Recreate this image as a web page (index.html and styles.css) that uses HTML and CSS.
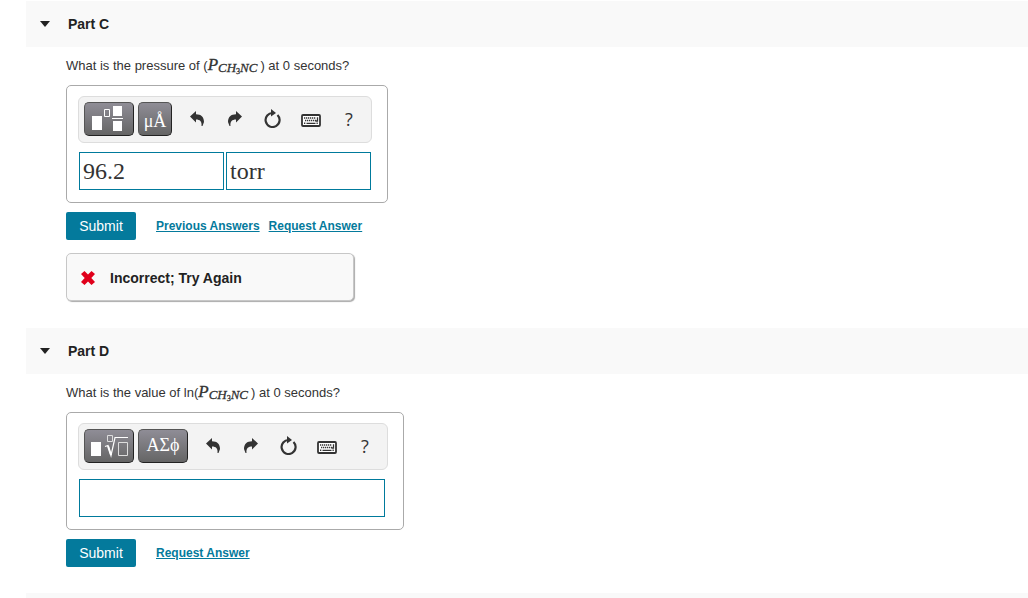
FILE: index.html
```html
<!DOCTYPE html>
<html lang="en">
<head>
    <meta charset="UTF-8">
    <meta name="viewport" content="width=device-width, initial-scale=1.0">
    <title>Assignment</title>
    <link rel="stylesheet" href="styles.css">
</head>
<body>
    <svg class="sprite" aria-hidden="true">
        <symbol id="undo" viewBox="0 0 14 15">
            <path d="M0 5.500 L6 0 V3.300 C11 3.300 14 6 14 11 L12.500 15 H11.500 C12 10.500 10 8.500 6 8.500 V11.500 Z" fill="#333"/>
        </symbol>
        <symbol id="redo" viewBox="0 0 14 15">
            <path d="M14 5.500 L8 0 V3.300 C3 3.300 0 6 0 11 L1.500 15 H2.500 C2 10.500 4 8.500 8 8.500 V11.500 Z" fill="#333"/>
        </symbol>
        <symbol id="reset" viewBox="0 0 18 19">
            <path d="M9 4 A7 7 0 1 0 13.500 6" fill="none" stroke="#333" stroke-width="2.200"/>
            <path d="M7 0 L12 4 L7 7.500 Z" fill="#333"/>
        </symbol>
        <symbol id="keyboard" viewBox="0 0 20 13">
            <rect x="1" y="1" width="18" height="11" rx="1" fill="#fff" stroke="#333" stroke-width="1.800"/>
            <path d="M3 4 H15 M4 6.500 H15 M3 9.300 H4.500 M15.500 9.300 H17" stroke="#333" stroke-width="1.400" stroke-dasharray="1.300 0.700"/>
            <path d="M5.500 9.300 H14.500 M16.500 3.300 V7 H14.500" fill="none" stroke="#333" stroke-width="1.300"/>
        </symbol>
    </svg>

    <main>
        <section class="part">
            <header class="part-header">
                <button class="toggle" type="button" aria-label="Collapse Part C"></button>
                <h2>Part C</h2>
            </header>
            <div class="part-body">
                <p class="question">What is the pressure of (<span class="math"><i>P</i><sub>CH<sub>3</sub>NC</sub></span>) at 0 seconds?</p>
                <div class="answer-box">
                    <div class="toolbar">
                        <button class="tool" type="button" aria-label="Templates">
                            <svg width="34" height="26" viewBox="0 0 34 26">
                                <path d="M0 10h10v14H0z M21 0h9v10h-9z M21 15h9v10h-9z" fill="#fff"/>
                                <path d="M12.500 3.500h5v7h-5z M20 12.500h11" fill="none" stroke="#fff"/>
                            </svg>
                        </button>
                        <button class="tool units" type="button">μÅ</button>
                        <div class="actions">
                            <button class="action" type="button" aria-label="Undo"><svg width="14" height="15"><use href="#undo"/></svg></button>
                            <button class="action" type="button" aria-label="Redo"><svg width="14" height="15"><use href="#redo"/></svg></button>
                            <button class="action" type="button" aria-label="Reset"><svg width="18" height="19"><use href="#reset"/></svg></button>
                            <button class="action keys" type="button" aria-label="Keyboard shortcuts"><svg width="20" height="13"><use href="#keyboard"/></svg></button>
                            <button class="action" type="button">?</button>
                        </div>
                    </div>
                    <div class="fields">
                        <input class="field" type="text" value="96.2" size="1" aria-label="Value">
                        <input class="field" type="text" value="torr" size="1" aria-label="Units">
                    </div>
                </div>
                <div class="controls">
                    <button class="submit" type="button">Submit</button>
                    <a href="#">Previous Answers</a>
                    <a href="#">Request Answer</a>
                </div>
                <div class="feedback">
                    <svg width="14" height="14" viewBox="0 0 14 14" aria-hidden="true">
                        <path d="M3.500 0 L7 3.500 L10.500 0 L14 3 L10.300 7 L14 11 L10.500 14 L7 10.500 L3.500 14 L0 11 L3.700 7 L0 3 Z" fill="#e0001b"/>
                    </svg>
                    <strong>Incorrect; Try Again</strong>
                </div>
            </div>
        </section>

        <section class="part">
            <header class="part-header">
                <button class="toggle" type="button" aria-label="Collapse Part D"></button>
                <h2>Part D</h2>
            </header>
            <div class="part-body">
                <p class="question">What is the value of ln(<span class="math"><i>P</i><sub>CH<sub>3</sub>NC</sub></span>) at 0 seconds?</p>
                <div class="answer-box wide">
                    <div class="toolbar">
                        <button class="tool" type="button" aria-label="Templates">
                            <svg width="40" height="26" viewBox="-1 0 40 26">
                                <path d="M1 9h10v14H1z" fill="#fff"/>
                                <path d="M17.500 2.500h5v6h-5z M28.500 9.500h9v13h-9z" fill="none" stroke="#ddd"/>
                                <path d="M15 13.500l3-1 3 10 4-18h13" fill="none" stroke="#fff" stroke-width="1.200"/>
                                <path d="M18 13l3 9" stroke="#fff" stroke-width="2"/>
                            </svg>
                        </button>
                        <button class="tool" type="button">ΑΣϕ</button>
                        <div class="actions">
                            <button class="action" type="button" aria-label="Undo"><svg width="14" height="15"><use href="#undo"/></svg></button>
                            <button class="action" type="button" aria-label="Redo"><svg width="14" height="15"><use href="#redo"/></svg></button>
                            <button class="action" type="button" aria-label="Reset"><svg width="18" height="19"><use href="#reset"/></svg></button>
                            <button class="action keys" type="button" aria-label="Keyboard shortcuts"><svg width="20" height="13"><use href="#keyboard"/></svg></button>
                            <button class="action" type="button">?</button>
                        </div>
                    </div>
                    <div class="fields">
                        <input class="field" type="text" size="1" aria-label="Answer">
                    </div>
                </div>
                <div class="controls">
                    <button class="submit" type="button">Submit</button>
                    <a href="#">Request Answer</a>
                </div>
            </div>
        </section>

        <div class="next-part"></div>
    </main>
</body>
</html>
```

FILE: styles.css
```css
* {
    box-sizing: border-box;
}
body {
    margin: 0;
    background: #fff;
    color: #333;
    font-family: "Liberation Sans", Arial, sans-serif;
    font-size: 13px;
}
button {
    font-family: inherit;
    cursor: pointer;
}
.sprite {
    display: none;
}
main {
    padding: 1px 0 0 26px;
}
.part {
    margin-bottom: 26px;
}
.part-header {
    display: flex;
    align-items: center;
    gap: 18px;
    height: 46px;
    padding-left: 14px;
    background: #f9f9f9;
}
.part-header h2 {
    margin: 0;
    font-size: 14px;
    color: #222;
}
.toggle {
    width: 10px;
    height: 6px;
    padding: 0;
    border: 0;
    background: #222;
    clip-path: polygon(0 0, 100% 0, 50% 100%);
}
.part-body {
    padding-left: 40px;
}
.question {
    margin: 0;
    height: 38px;
    line-height: 38px;
}
.math {
    font-family: "Liberation Serif", "Times New Roman", serif;
    font-style: italic;
    font-size: 17px;
    line-height: 1px;
    padding-right: 3px;
}
.math i {
    -webkit-text-stroke: 0.3px #333;
}
.math sub {
    font-size: 13px;
    vertical-align: -2px;
    -webkit-text-stroke: 0.3px #333;
}
.math sub sub {
    font-size: 8px;
    font-style: normal;
}

/* answer editor */
.answer-box {
    width: 322px;
    max-width: 100%;
    padding: 10px 15px 12px 11px;
    border: 1px solid #aaa;
    border-radius: 5px;
}
.wide {
    width: 338px;
}
.toolbar {
    display: flex;
    align-items: center;
    gap: 4px;
    height: 47px;
    padding: 0 5px 2px;
    border: 1px solid #ddd;
    border-radius: 6px;
    background: #f3f3f3;
}
.tool {
    display: flex;
    flex: none;
    align-items: center;
    justify-content: center;
    width: 50px;
    height: 34px;
    padding: 0;
    border: 1px solid #555;
    border-right-color: #222;
    border-bottom-color: #222;
    border-radius: 5px;
    background: linear-gradient(#8f8d96, #656565);
    color: #fff;
    font-family: "Liberation Serif", "Times New Roman", serif;
    font-size: 18px;
}
.units {
    width: 34px;
    padding-top: 5px;
}
.actions {
    display: flex;
    flex: none;
    margin-left: 2px;
}
.action {
    display: flex;
    align-items: center;
    justify-content: center;
    width: 38px;
    height: 34px;
    padding: 0;
    border: 0;
    background: none;
    color: #333;
    font-family: "Open Sans", sans-serif;
    font-size: 18px;
    font-weight: 500;
}
.keys {
    padding-top: 4px;
}
.fields {
    display: flex;
    gap: 2px;
    margin: 9px 1px 0;
}
.wide .fields {
    margin-right: 3px;
}
.field {
    flex: 1;
    min-width: 0;
    height: 38px;
    padding: 0 3px;
    border: 1px solid #007a9c;
    background: #fff;
    color: #333;
    font-family: "Liberation Serif", "Times New Roman", serif;
    font-size: 24px;
}

.controls {
    display: flex;
    align-items: center;
    gap: 9px;
    margin-top: 9px;
}
.submit {
    width: 70px;
    height: 28px;
    margin-right: 11px;
    padding: 0;
    border: 0;
    border-radius: 2px;
    background: #047a9c;
    color: #fff;
    font-size: 14px;
}
.controls a {
    color: #047a9c;
    font-size: 12px;
    font-weight: bold;
}
.feedback {
    display: flex;
    align-items: center;
    gap: 15px;
    width: 288px;
    height: 48px;
    margin: 13px 0 27px;
    padding: 1px 0 0 14px;
    border: 1px solid #c7c7c7;
    border-radius: 5px;
    background: #f9f9f9;
    box-shadow: 1px 1px 1px #aaa;
    color: #222;
    font-size: 14px;
}
/* the feedback margin collapses into the part margin */
.next-part {
    height: 5px;
    background: #f9f9f9;
}
```
